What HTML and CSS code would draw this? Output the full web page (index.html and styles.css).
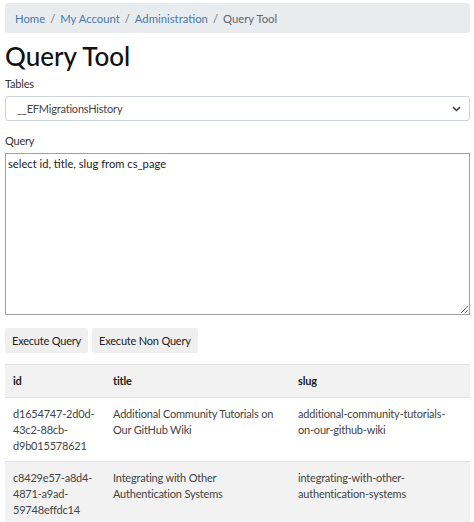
FILE: index.html
```html
<!DOCTYPE html>
<html lang="en">
<head>
    <meta charset="UTF-8">
    <meta name="viewport" content="width=device-width, initial-scale=1.0">
    <title>Query Tool</title>
    <link rel="stylesheet" href="styles.css">
</head>
<body>
<div class="page">
    <nav class="breadcrumb">
        <a href="#">Home</a><span class="sep">/</span>
        <a href="#">My Account</a><span class="sep">/</span>
        <a href="#">Administration</a><span class="sep">/</span>
        <span class="current">Query Tool</span>
    </nav>
    <h1>Query Tool</h1>
    <label class="field-label">Tables</label>
    <div class="select">
        <span>__EFMigrationsHistory</span>
        <svg width="9" height="6" viewBox="0 0 9 6"><path d="M1 1.2 L4.5 4.5 L8 1.2" fill="none" stroke="#444" stroke-width="1.6"/></svg>
    </div>
    <label class="field-label">Query</label>
    <textarea class="query-box">select id, title, slug from cs_page</textarea>
    <div class="actions">
        <button class="btn">Execute Query</button>
        <button class="btn">Execute Non Query</button>
    </div>
    <table class="results">
        <thead>
            <tr>
                <th class="col-id">id</th>
                <th class="col-title">title</th>
                <th>slug</th>
            </tr>
        </thead>
        <tbody>
            <tr>
                <td>d1654747-2d0d-43c2-88cb-d9b015578621</td>
                <td>Additional Community Tutorials on Our GitHub Wiki</td>
                <td class="slug">additional-community-tutorials-on-our-github-wiki</td>
            </tr>
            <tr class="alt">
                <td>c8429e57-a8d4-4871-a9ad-59748effdc14</td>
                <td>Integrating with Other Authentication Systems</td>
                <td class="slug">integrating-with-other-authentication-systems</td>
            </tr>
        </tbody>
    </table>
</div>
</body>
</html>
```

FILE: styles.css
```css
body { margin: 0; font-family: Lato, "Open Sans", sans-serif; font-size: 11px; letter-spacing: -0.2px; color: #212529; background: #fff; }
.page { padding: 3px 4px 0 5px; }
.breadcrumb { background: #e9ecef; border-radius: 3px; height: 30px; display: flex; align-items: center; padding: 0 10px; font-size: 11.3px; letter-spacing: 0; }
.breadcrumb a { color: #4a78a8; text-decoration: none; }
.breadcrumb .sep { color: #6c757d; margin: 0 5px; }
.breadcrumb .current { color: #5f6670; }
h1 { font-size: 26px; font-weight: 500; margin: 8px 0 5px; line-height: 30px; color: #111; letter-spacing: 0; }
.field-label { display: block; color: #333; line-height: 16px; margin-bottom: 4px; }
.select { height: 25px; border: 1px solid #ced4da; border-radius: 3px; box-sizing: border-box; display: flex; align-items: center; justify-content: space-between; padding: 0 8px 0 11px; color: #444; margin-bottom: 12px; }
.query-box { display: block; width: 100%; box-sizing: border-box; height: 162px; border: 1px solid #a0a0a0; font-family: inherit; font-size: 11.2px; color: #222; padding: 3px 2px; resize: vertical; margin: 0 0 13px; }
.actions { display: flex; gap: 4px; margin-bottom: 11px; }
.btn { background: #efefef; border: none; border-radius: 2px; height: 25px; padding: 0 7px; font-family: inherit; font-size: 11px; letter-spacing: -0.2px; color: #222; }
.results { width: 100%; border-collapse: collapse; }
.results th, .results td { text-align: left; vertical-align: top; padding: 8px 8px 7px; line-height: 16px; border-top: 1px solid #e2e2e2; }
.results th { background: #f2f2f2; font-weight: 700; color: #222; padding: 8px; }
.results td { color: #444; }
.results td.slug { padding-right: 14px; }
.results tr.alt td { background: #f2f2f2; }
.col-id { width: 84px; }
.col-title { width: 169px; }
```
